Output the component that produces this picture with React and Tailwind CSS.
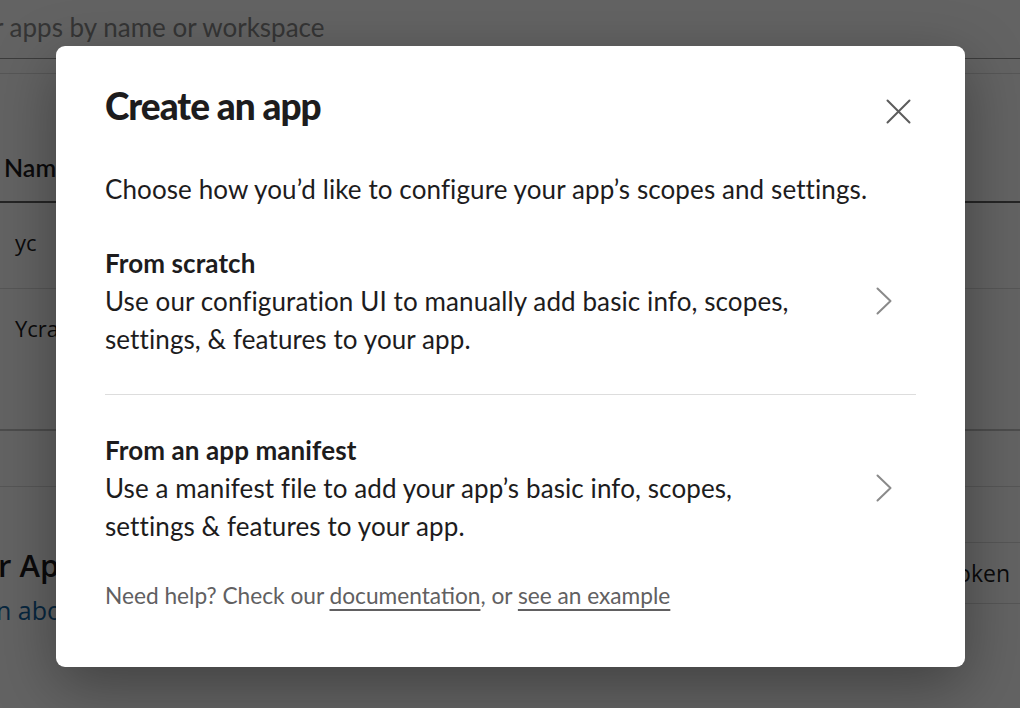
import React from 'react';

const CloseIcon = () => (
  <svg width="25" height="25" viewBox="0 0 25 25" fill="none" stroke="#5c5c5c" strokeWidth="2" strokeLinecap="round">
    <path d="M1.5 1.5L23.5 23.5M23.5 1.5L1.5 23.5" />
  </svg>
);

const Chevron = () => (
  <svg width="16" height="28" viewBox="0 0 16 28" fill="none" stroke="#8a8a8a" strokeWidth="2" strokeLinecap="round" strokeLinejoin="round">
    <path d="M1.5 1.5L14.5 14L1.5 26.5" />
  </svg>
);

const options = [
  {
    title: 'From scratch',
    text: 'Use our configuration UI to manually add basic info, scopes, settings, & features to your app.',
  },
  {
    title: 'From an app manifest',
    text: 'Use a manifest file to add your app’s basic info, scopes, settings & features to your app.',
  },
];

// the apps page sitting behind the dialog
const BackgroundPage = () => (
  <div className="flex flex-col">
    <div className="h-[59px] border-b border-[#9a9a9a] flex items-center pb-[4px] -ml-[6px] text-[26px] text-[#8a8a8a] font-['Lato',sans-serif]">
      r apps by name or workspace
    </div>
    <div className="h-[15px] border-b border-[#dddddd]" />
    <div className="h-[129px] border-b-2 border-[#616061] flex items-end pb-[19px] pl-[4px] text-[25px] leading-[30px] font-semibold text-[#1d1c1d] font-['Lato',sans-serif]">
      Name
    </div>
    <div className="h-[86px] border-b border-[#dddddd] pt-[24px] pl-[15px] text-[22px] leading-[30px] text-[#1d1c1d] font-['Open_Sans',sans-serif]">
      yc
    </div>
    <div className="h-[142px] border-b-2 border-[#c4c4c4] pt-[24px] pl-[15px] text-[22px] leading-[30px] text-[#1d1c1d] font-['Open_Sans',sans-serif]">
      Ycraft
    </div>
    <div className="h-[56px] border-b border-[#dddddd]" />
    <div className="flex justify-between">
      <div className="pt-[58px] -ml-[2px] font-['Open_Sans',sans-serif]">
        <div className="text-[31px] leading-[40px] font-semibold text-[#1d1c1d]">r Apps</div>
        <div className="mt-[9px] -ml-[2px] text-[25px] leading-[32px] text-[#1264a3]">n about</div>
      </div>
      <div className="mt-[55px] h-[62px] w-[300px] border-y border-[#dddddd] flex items-center justify-end pr-[10px] text-[23px] text-[#1d1c1d] font-['Open_Sans',sans-serif]">
        Generate Token
      </div>
    </div>
  </div>
);

export default function App() {
  return (
    <div className="relative w-[1020px] h-[708px] overflow-hidden bg-white">
      <BackgroundPage />
      <div className="absolute inset-0 bg-black/[0.61]" />

      <div className="absolute left-[56px] top-[46px] w-[909px] h-[621px] rounded-[9px] bg-white shadow-[0_18px_60px_rgba(0,0,0,0.35)] px-[49px] pt-[38px] font-['Lato',sans-serif] text-[#1d1c1d]">
        <div className="flex items-start justify-between">
          <h1 className="text-[37px] leading-[44px] font-black tracking-[-1px]">Create an app</h1>
          <button className="mt-[15px] mr-[5px]">
            <CloseIcon />
          </button>
        </div>

        <p className="mt-[42px] text-[26px] leading-[38px] tracking-[0.1px]">
          Choose how you’d like to configure your app’s scopes and settings.
        </p>

        <div className="flex flex-col">
          {options.map((opt, i) => (
            <div key={i} className={`flex items-center py-[36px] ${i > 0 ? 'border-t border-[#dddddd]' : ''}`}>
              <div className="w-[712px] text-[26px] leading-[38px] tracking-[0.1px]">
                <div className="font-bold">{opt.title}</div>
                <div>{opt.text}</div>
              </div>
              <div className="ml-auto mr-[24px]">
                <Chevron />
              </div>
            </div>
          ))}
        </div>

        <p className="mt-[1px] text-[22.7px] leading-[28px] text-[#616061]">
          Need help? Check our{' '}
          <span className="underline decoration-[1.5px] underline-offset-[5px]">documentation</span>, or{' '}
          <span className="underline decoration-[1.5px] underline-offset-[5px]">see an example</span>
        </p>
      </div>
    </div>
  );
}
